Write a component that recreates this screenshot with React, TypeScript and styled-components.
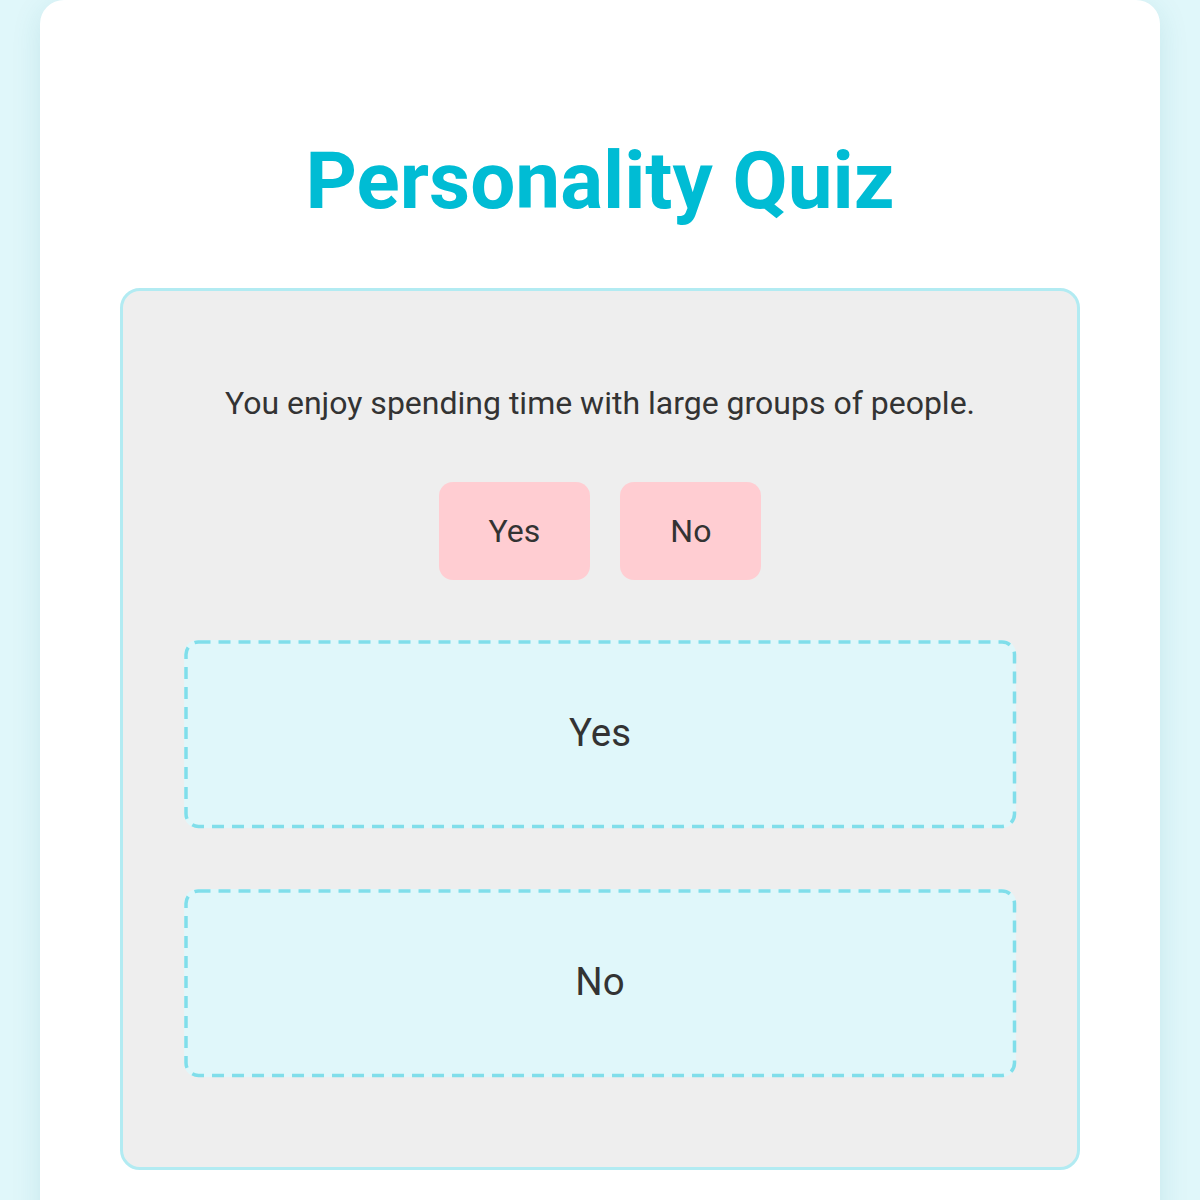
import React from "react";
import styled, { createGlobalStyle } from "styled-components";

const GlobalStyle = createGlobalStyle`
  html, body {
    margin: 0;
    padding: 0;
    background: #e0f7fa;
    font-family: Roboto, "Noto Sans", "Liberation Sans", sans-serif;
    color: #333333;
  }
  * { box-sizing: border-box; }
`;

const Page = styled.div`
  padding: 0 40px;
`;

const Card = styled.main`
  background: #ffffff;
  border-radius: 24px;
  padding: 80px 80px 80px;
  box-shadow: 0 6px 30px rgba(0, 120, 140, 0.12);
`;

const Title = styled.h1`
  margin: 54px 0 60px;
  font-size: 80px;
  font-weight: 700;
  line-height: normal;
  text-align: center;
  color: #00bcd4;
`;

const QuizBox = styled.section`
  background: #eeeeee;
  border: 3px solid #b2ebf2;
  border-radius: 20px;
  padding: 60px 61px 90px;
  display: flex;
  flex-direction: column;
`;

const Question = styled.p`
  margin: 33px 0 0;
  font-size: 32px;
  line-height: normal;
  text-align: center;
  color: #333333;
`;

const Choices = styled.div`
  margin-top: 60px;
  display: flex;
  justify-content: center;
  gap: 30px;
`;

const ChoiceButton = styled.button`
  font-family: inherit;
  font-size: 32px;
  line-height: normal;
  color: #333333;
  background: #ffcdd2;
  border: none;
  border-radius: 14px;
  padding: 30px 50px;
  cursor: pointer;
`;

const DropZone = styled.div<{ $first?: boolean }>`
  position: relative;
  margin-top: ${(p) => (p.$first ? "60px" : "61px")};
  background: #e0f7fa;
  border-radius: 14px;
  padding: 70px 23px 73px;
  font-size: 38.4px;
  line-height: normal;
  text-align: center;
  color: #333333;
`;

/* dashed outline drawn over the zone's edge, with longer dashes than a CSS dashed border */
const Outline = styled.svg`
  position: absolute;
  inset: 1.75px;
  width: calc(100% - 3.5px);
  height: calc(100% - 3.5px);
  overflow: visible;
  pointer-events: none;
`;

const DashedOutline = () => (
  <Outline aria-hidden="true">
    <rect
      x="0"
      y="0"
      width="100%"
      height="100%"
      rx="12.5"
      ry="12.5"
      fill="none"
      stroke="#80deea"
      strokeWidth="3.5"
      strokeDasharray="12 8"
    />
  </Outline>
);

const answers = ["Yes", "No"];

export default function App() {
  return (
    <>
      <GlobalStyle />
      <Page>
        <Card>
          <Title>Personality Quiz</Title>
          <QuizBox>
            <Question>You enjoy spending time with large groups of people.</Question>
            <Choices>
              {answers.map((a) => (
                <ChoiceButton key={a}>{a}</ChoiceButton>
              ))}
            </Choices>
            {answers.map((a, i) => (
              <DropZone key={a} $first={i === 0}>
                <DashedOutline />
                {a}
              </DropZone>
            ))}
          </QuizBox>
        </Card>
      </Page>
    </>
  );
}
